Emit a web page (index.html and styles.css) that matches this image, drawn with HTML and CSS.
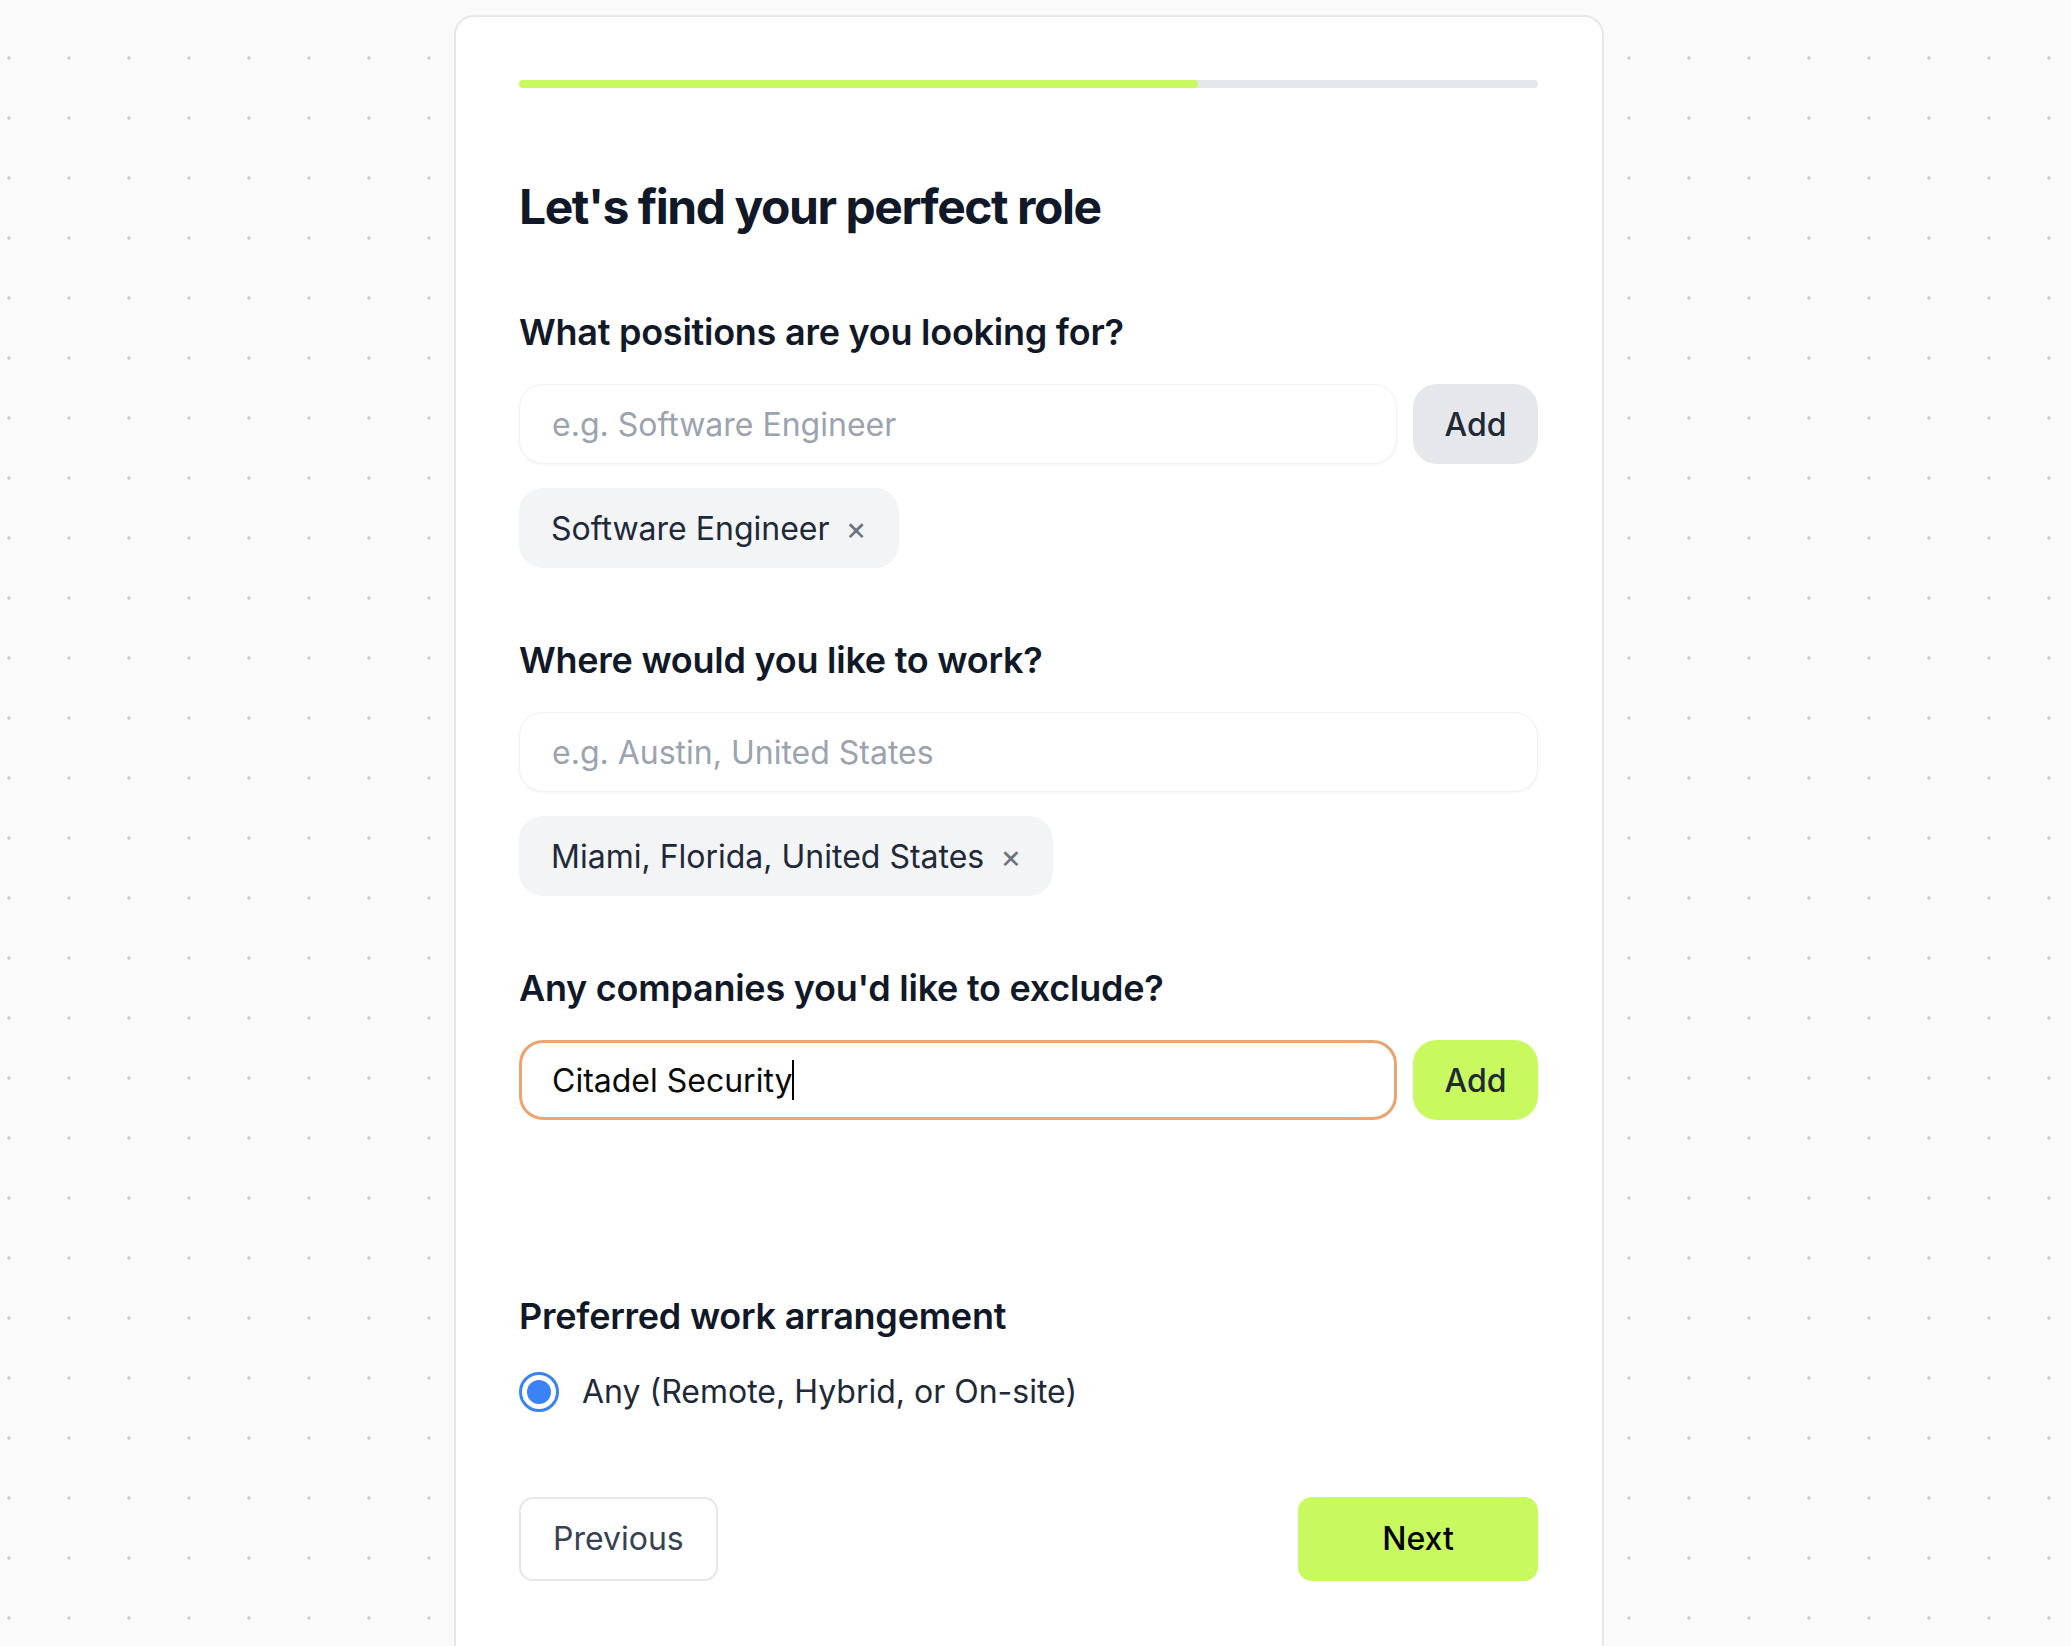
FILE: index.html
```html
<!DOCTYPE html>
<html lang="en">
<head>
  <meta charset="UTF-8">
  <meta name="viewport" content="width=device-width, initial-scale=1.0">
  <title>Find your role</title>
  <link rel="stylesheet" href="styles.css">
</head>
<body>
  <div class="page">
    <div class="card">
      <div class="progress">
        <div class="progress-fill" style="width: 66.67%;"></div>
      </div>

      <h1 class="title">Let's find your perfect role</h1>

      <div class="section">
        <label class="question" for="position">What positions are you looking for?</label>
        <div class="input-row">
          <input type="text" id="position" class="field" placeholder="e.g. Software Engineer">
          <button type="button" class="add-btn">Add</button>
        </div>
        <div class="chips">
          <span class="chip">Software Engineer <span class="chip-x">×</span></span>
        </div>
      </div>

      <div class="section">
        <label class="question" for="location">Where would you like to work?</label>
        <div class="input-row">
          <input type="text" id="location" class="field" placeholder="e.g. Austin, United States">
        </div>
        <div class="chips">
          <span class="chip">Miami, Florida, United States <span class="chip-x">×</span></span>
        </div>
      </div>

      <div class="section">
        <label class="question">Any companies you'd like to exclude?</label>
        <div class="input-row">
          <div class="field field-focus"><span>Citadel Security</span><span class="caret"></span></div>
          <button type="button" class="add-btn add-btn-active">Add</button>
        </div>
        <div class="chips"></div>
      </div>

      <div class="section section-last">
        <div class="question">Preferred work arrangement</div>
        <div class="radio-row">
          <span class="radio"><span class="radio-dot"></span></span>
          <span>Any (Remote, Hybrid, or On-site)</span>
        </div>
      </div>

      <div class="actions">
        <button type="button" class="btn-prev">Previous</button>
        <button type="button" class="btn-next">Next</button>
      </div>
    </div>
  </div>
</body>
</html>
```

FILE: styles.css
```css
* { box-sizing: border-box; }

body {
  margin: 0;
  font-family: Inter, "Noto Sans", sans-serif;
  color: #111827;
  background-color: #fafafa;
  background-image: radial-gradient(circle, #cfcfcf 1.4px, transparent 2px);
  background-size: 60px 60px;
  background-position: -21px 28px;
}

.page { padding: 15px 0 0 454px; }

.card {
  width: 1150px;
  background: #fff;
  border: 2px solid #e5e7eb;
  border-radius: 20px;
  padding: 63px 64px 96px 63px;
}

.progress { height: 8px; border-radius: 4px; background: #e5e7eb; margin-bottom: 87px; }
.progress-fill { height: 100%; border-radius: 4px; background: #c8fa5f; }

.title { margin: 0 0 65px; font-size: 48px; line-height: 64px; font-weight: 700; letter-spacing: -1.45px; color: #111827; }

.section { margin-bottom: 64px; }
.section-last { margin-bottom: 0; }

.question { display: block; margin-bottom: 24px; font-size: 36px; line-height: 56px; font-weight: 600; letter-spacing: -0.25px; color: #111827; }

.input-row { display: flex; gap: 16px; }

.field {
  flex: 1;
  height: 80px;
  padding: 0 32px;
  border: 1px solid #f1f2f4;
  border-radius: 24px;
  background: #fff;
  box-shadow: 0 1px 3px rgba(0, 0, 0, 0.05);
  font-family: inherit;
  font-size: 32px;
  color: #111;
  outline: none;
}
.field::placeholder { color: #9ca3af; }

.field-focus {
  display: flex;
  align-items: center;
  padding-left: 30px;
  border: 3px solid #e9a46f;
  box-shadow: none;
  color: #0a0a0a;
}
.caret { width: 2px; height: 40px; background: #000; }

.add-btn {
  width: 125px;
  height: 80px;
  border: none;
  border-radius: 24px;
  background: #e5e7eb;
  font-family: inherit;
  font-size: 32px;
  font-weight: 500;
  color: #1f2937;
}
.add-btn-active { background: #c8fa5f; }

.chips { display: flex; gap: 16px; min-height: 80px; margin-top: 24px; }

.chip {
  display: inline-flex;
  align-items: center;
  height: 80px;
  padding: 0 32px;
  border-radius: 24px;
  background: #f3f4f6;
  font-size: 32px;
  color: #1f2937;
}
.chip-x { margin-left: 16px; font-size: 32px; color: #6b7280; }

.radio-row { display: flex; align-items: center; gap: 23px; font-size: 32px; line-height: 48px; color: #1f2937; }
.radio {
  display: flex;
  align-items: center;
  justify-content: center;
  width: 40px;
  height: 40px;
  border: 3px solid #3b82f6;
  border-radius: 50%;
}
.radio-dot { width: 24px; height: 24px; border-radius: 50%; background: #3b82f6; }

.actions { display: flex; justify-content: space-between; margin-top: 81px; }

.btn-prev {
  padding: 16px 32px;
  border: 2px solid #e5e7eb;
  border-radius: 14px;
  background: #fff;
  font-family: inherit;
  font-size: 32px;
  line-height: 48px;
  color: #374151;
}
.btn-next {
  width: 240px;
  padding: 16px 32px;
  border: 2px solid #c8fa5f;
  border-radius: 14px;
  background: #c8fa5f;
  font-family: inherit;
  font-size: 32px;
  line-height: 48px;
  font-weight: 500;
  color: #000;
}
```
